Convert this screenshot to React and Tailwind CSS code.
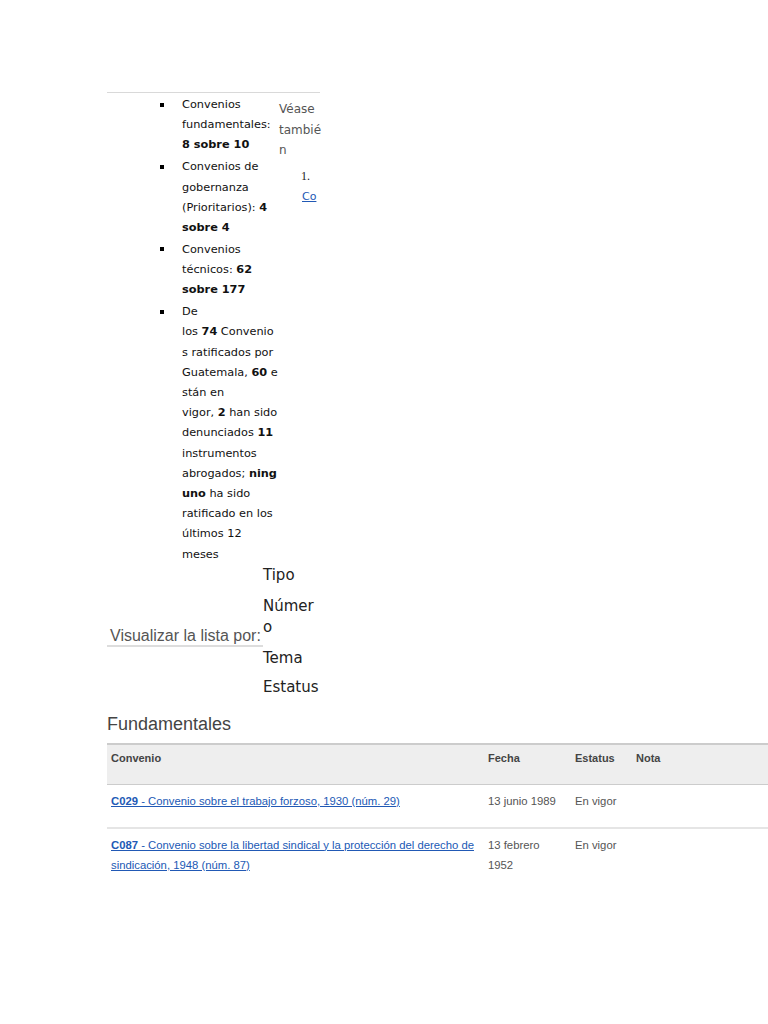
export default function App() {
  const dv = { fontFamily: '"DejaVu Sans", sans-serif' };
  const ls = { fontFamily: '"Liberation Sans", Arial, sans-serif' };
  const items = [
    [<>Convenios</>, <>fundamentales:</>, <b>8 sobre 10</b>],
    [<>Convenios de</>, <>gobernanza</>, <>(Prioritarios): <b>4</b></>, <b>sobre 4</b>],
    [<>Convenios</>, <>técnicos: <b>62</b></>, <b>sobre 177</b>],
    [
      <>De</>,
      <>los <b>74</b> Convenio</>,
      <>s ratificados por</>,
      <>Guatemala, <b>60</b> e</>,
      <>stán en</>,
      <>vigor, <b>2</b> han sido</>,
      <>denunciados <b>11</b></>,
      <>instrumentos</>,
      <>abrogados; <b>ning</b></>,
      <><b>uno</b> ha sido</>,
      <>ratificado en los</>,
      <>últimos 12</>,
      <>meses</>,
    ],
  ];
  const link = "text-[#2159b5] underline";
  return (
    <div className="w-[768px] h-[1024px] overflow-hidden bg-white">
      <div className="pt-[92px] pl-[107px]">
        <div className="w-[213px] border-t border-[#d9d9d9] flex">
          <ul className="w-[172px] pl-[53px] pt-[2px] text-[11.3px] leading-[20.2px] text-[#111]" style={dv}>
            {items.map((lines, i) => (
              <li key={i} className={"flex " + (i > 0 ? "mt-[1.7px]" : "")}>
                <div className="w-[22px] shrink-0">
                  <div className="w-[4px] h-[4px] bg-black mt-[7.5px]" />
                </div>
                <div className="whitespace-nowrap">
                  {lines.map((l, j) => (
                    <div key={j}>{l}</div>
                  ))}
                </div>
              </li>
            ))}
          </ul>
          <div className="w-[41px] pt-[6px] whitespace-nowrap">
            <div className="text-[12px] leading-[20.5px] text-[#555]" style={dv}>
              <div>Véase</div>
              <div>tambié</div>
              <div>n</div>
            </div>
            <div className="mt-[5px] ml-[22px] text-[12px] leading-[20px] text-[#222]" style={{ fontFamily: '"Liberation Serif", serif' }}>
              1.
            </div>
            <div className="ml-[23px] mt-[1px] text-[11px] leading-[20px]" style={dv}>
              <span className={link}>Co</span>
            </div>
          </div>
        </div>

        <div className="flex">
          <div className="w-[156px] shrink-0">
            <div className="mt-[62px] pl-[3px] text-[16px] leading-[18px] text-[#555] border-b-2 border-[#ddd] whitespace-nowrap" style={ls}>
              Visualizar la lista por:
            </div>
          </div>
          <div className="w-[57px] flex flex-col text-[15px] leading-[20.5px] text-[#222] whitespace-nowrap pt-[0.5px]" style={dv}>
            <div>Tipo</div>
            <div className="mt-[10.5px]">
              Númer
              <br />o
            </div>
            <div className="mt-[10.5px]">Tema</div>
            <div className="mt-[8.5px]">Estatus</div>
          </div>
        </div>

        <h2 className="mt-[17px] text-[18px] leading-[21px] text-[#444]" style={ls}>
          Fundamentales
        </h2>

        <table className="mt-[7.5px] w-[661px] table-fixed border-collapse text-[11.3px] leading-[20px]" style={ls}>
          <colgroup>
            <col className="w-[377px]" />
            <col className="w-[87px]" />
            <col className="w-[61px]" />
            <col className="w-[136px]" />
          </colgroup>
          <thead>
            <tr className="bg-[#eee] border-t-2 border-[#ccc] border-b border-b-[#ccc] text-left text-[#444] text-[11px]">
              <th className="px-[4px] pt-[3px] pb-[16px] font-bold">Convenio</th>
              <th className="px-[4px] pt-[3px] pb-[16px] font-bold">Fecha</th>
              <th className="px-[4px] pt-[3px] pb-[16px] font-bold">Estatus</th>
              <th className="px-[4px] pt-[3px] pb-[16px] font-bold">Nota</th>
            </tr>
          </thead>
          <tbody className="text-[#555] align-top">
            <tr className="border-b-2 border-[#e5e5e5]">
              <td className="px-[4px] pt-[6px] pb-[16px] whitespace-nowrap">
                <a className={link}>
                  <b>C029</b> - Convenio sobre el trabajo forzoso, 1930 (núm. 29)
                </a>
              </td>
              <td className="px-[4px] pt-[6px] pb-[16px] whitespace-nowrap">13 junio 1989</td>
              <td className="px-[4px] pt-[6px] pb-[16px] whitespace-nowrap">En vigor</td>
              <td className="px-[4px] pt-[6px] pb-[16px]"></td>
            </tr>
            <tr>
              <td className="px-[4px] pt-[6px] pb-[16px] whitespace-nowrap">
                <a className={link}>
                  <b>C087</b> - Convenio sobre la libertad sindical y la protección del derecho de{" "}
                  <br />
                  sindicación, 1948 (núm. 87)
                </a>
              </td>
              <td className="px-[4px] pt-[6px] pb-[16px] whitespace-nowrap">
                13 febrero
                <br />
                1952
              </td>
              <td className="px-[4px] pt-[6px] pb-[16px] whitespace-nowrap">En vigor</td>
              <td className="px-[4px] pt-[6px] pb-[16px]"></td>
            </tr>
          </tbody>
        </table>
      </div>
    </div>
  );
}
